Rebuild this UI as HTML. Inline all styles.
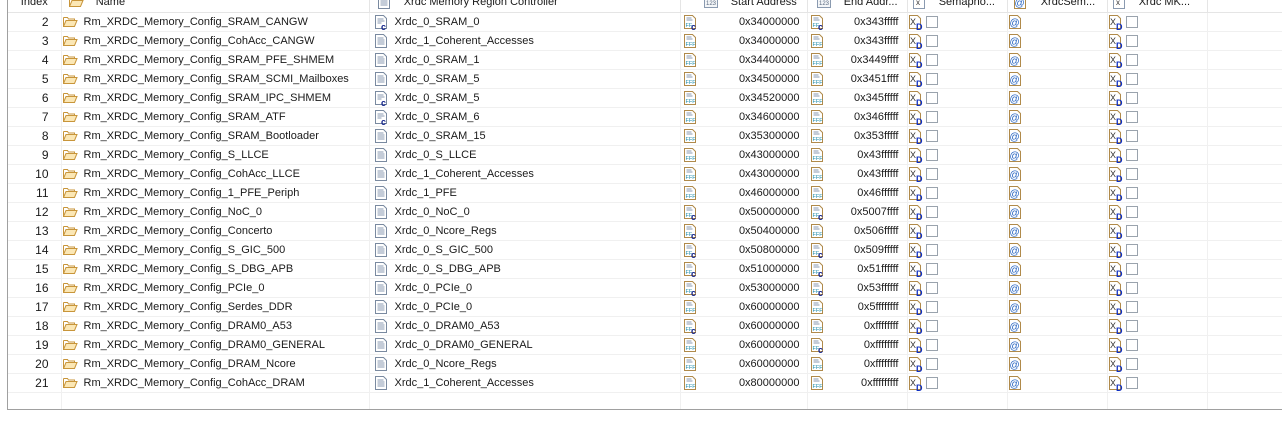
<!DOCTYPE html>
<html><head><meta charset="utf-8"><style>
*{margin:0;padding:0;box-sizing:border-box}
body{width:1282px;height:431px;background:#fff;overflow:hidden;position:relative;font-family:"Liberation Sans",sans-serif;font-size:11px;color:#1a1a1a}
#wrap{position:absolute;left:7px;top:-7px;width:1275px;height:417px;border-left:1px solid #a0a0a0;border-bottom:1px solid #a0a0a0;overflow:hidden}
table{border-collapse:collapse;table-layout:fixed;width:1275px}
td,th{height:19px;border-right:1px solid #f0f0f0;border-bottom:1px solid #f0f0f0;white-space:nowrap;overflow:hidden;font-weight:normal;padding:0;vertical-align:middle;position:relative}
th{border-right:1px solid #e5e5e5;border-bottom:1px solid #e5e5e5;text-align:left}
td.i{text-align:right;padding-right:12px;font-size:12px}
svg{vertical-align:middle;display:inline-block}
.n svg{margin:0 6px 0 0}
.a{text-align:right;padding-right:7px}
.a svg{position:absolute;left:2px;top:1px}
.cb{display:inline-block;width:12px;height:12px;border:1px solid #9aa3ad;background:#fff;vertical-align:middle;margin-left:2px}
tr.e td{height:18px}
</style></head><body>
<svg width="0" height="0" style="position:absolute">
<defs>
<symbol id="fo" viewBox="0 0 16 16"><path d="M1.5 3.5h4l1 1.5h6v2" fill="none" stroke="#c8953a"/><path d="M1.5 3.5v9h11l2.5-6h-11l-2.5 6" fill="#fbe7b5" stroke="#c8953a"/></symbol>
<symbol id="dc" viewBox="0 0 16 16"><path d="M2.5 1.5h8l3 3v10h-11z" fill="#fff" stroke="#7a8aa0"/><path d="M4.5 5h6M4.5 7h7M4.5 9h7M4.5 11h7" stroke="#8a9ab0"/></symbol>
<symbol id="dcc" viewBox="0 0 16 16"><path d="M2.5 1.5h8l3 3v10h-11z" fill="#fff" stroke="#7a8aa0"/><path d="M4.5 5h6M4.5 7h7M4.5 9h4" stroke="#8a9ab0"/><text x="8" y="16" font-size="9" font-weight="bold" fill="#10208a" font-family="Liberation Sans">c</text></symbol>
<symbol id="ff" viewBox="0 0 16 16"><path d="M1.5 1.5h8l3 3v10h-11z" fill="#fff" stroke="#b08a4a"/><path d="M3.5 4h5M3.5 6h6" stroke="#8a9ab0"/><text x="2.5" y="13" font-size="5.5" fill="#1a8aa8" font-family="Liberation Sans">FFF</text></symbol>
<symbol id="fc" viewBox="0 0 16 16"><path d="M1.5 1.5h8l3 3v10h-11z" fill="#fff" stroke="#b08a4a"/><path d="M3.5 4h5M3.5 6h6" stroke="#8a9ab0"/><text x="2.5" y="13" font-size="5.5" fill="#1a8aa8" font-family="Liberation Sans">FF</text><text x="8" y="16" font-size="9" font-weight="bold" fill="#10208a" font-family="Liberation Sans">c</text></symbol>
<symbol id="xd" viewBox="0 0 16 16"><path d="M1.5 1.5h8l3 3v10h-11z" fill="#fff" stroke="#b08a4a"/><text x="2" y="11" font-size="9" fill="#333" font-family="Liberation Sans">X</text><text x="8" y="16" font-size="9" font-weight="bold" fill="#1030c0" font-family="Liberation Sans">D</text></symbol>
<symbol id="at" viewBox="0 0 16 16"><path d="M1.5 1.5h8l3 3v10h-11z" fill="#fff" stroke="#b08a4a"/><text x="1.5" y="12" font-size="10" fill="#2060c0" font-family="Liberation Sans">@</text></symbol>
<symbol id="h1" viewBox="0 0 16 16"><rect x="1.5" y="2.5" width="13" height="11" fill="#f4f6f8" stroke="#8a9ab0"/><text x="3" y="11" font-size="6" fill="#5a6a80" font-family="Liberation Sans">123</text></symbol>
<symbol id="hx" viewBox="0 0 16 16"><rect x="2.5" y="1.5" width="11" height="13" fill="#fff" stroke="#8a9ab0"/><text x="5" y="11" font-size="8" fill="#333" font-family="Liberation Sans">x</text></symbol>
</defs></svg>
<div id="wrap"><table>
<colgroup><col style="width:53px"><col style="width:308px"><col style="width:311px"><col style="width:127px"><col style="width:100px"><col style="width:100px"><col style="width:100px"><col style="width:100px"><col style="width:76px"></colgroup>
<tr><th style="text-align:center">Index</th><th style="padding-left:6px"><svg width="16" height="16"><use href="#fo"/></svg>&nbsp;&nbsp;&nbsp;&nbsp;Name</th><th style="padding-left:6px"><svg width="16" height="16"><use href="#dc"/></svg>&nbsp;&nbsp;&nbsp;&nbsp;Xrdc Memory Region Controller</th><th style="padding-left:22px"><svg width="16" height="16"><use href="#h1"/></svg>&nbsp;&nbsp;&nbsp;&nbsp;Start Address</th><th style="padding-left:8px"><svg width="16" height="16"><use href="#h1"/></svg>&nbsp;&nbsp;&nbsp;&nbsp;End Addr...</th><th style="padding-left:3px"><svg width="16" height="16"><use href="#hx"/></svg>&nbsp;&nbsp;&nbsp;&nbsp;Semapho...</th><th style="padding-left:5px"><svg width="16" height="16"><use href="#at"/></svg>&nbsp;&nbsp;&nbsp;&nbsp;XrdcSem...</th><th style="padding-left:3px"><svg width="16" height="16"><use href="#hx"/></svg>&nbsp;&nbsp;&nbsp;&nbsp;Xrdc MK...</th><th></th></tr>
<tr><td class="i">2</td><td class="n"><svg width="16" height="16"><use href="#fo"/></svg>Rm_XRDC_Memory_Config_SRAM_CANGW</td><td class="n" style="padding-left:3px"><svg width="16" height="16"><use href="#dcc"/></svg>Xrdc_0_SRAM_0</td><td class="a"><svg width="16" height="16"><use href="#fc"/></svg>0x34000000</td><td class="a" style="padding-right:8px"><svg width="16" height="16"><use href="#fc"/></svg>0x343fffff</td><td><svg width="16" height="16"><use href="#xd"/></svg><span class="cb"></span></td><td><svg width="16" height="16"><use href="#at"/></svg></td><td><svg width="16" height="16"><use href="#xd"/></svg><span class="cb"></span></td><td></td></tr>
<tr><td class="i">3</td><td class="n"><svg width="16" height="16"><use href="#fo"/></svg>Rm_XRDC_Memory_Config_CohAcc_CANGW</td><td class="n" style="padding-left:3px"><svg width="16" height="16"><use href="#dc"/></svg>Xrdc_1_Coherent_Accesses</td><td class="a"><svg width="16" height="16"><use href="#ff"/></svg>0x34000000</td><td class="a" style="padding-right:8px"><svg width="16" height="16"><use href="#ff"/></svg>0x343fffff</td><td><svg width="16" height="16"><use href="#xd"/></svg><span class="cb"></span></td><td><svg width="16" height="16"><use href="#at"/></svg></td><td><svg width="16" height="16"><use href="#xd"/></svg><span class="cb"></span></td><td></td></tr>
<tr><td class="i">4</td><td class="n"><svg width="16" height="16"><use href="#fo"/></svg>Rm_XRDC_Memory_Config_SRAM_PFE_SHMEM</td><td class="n" style="padding-left:3px"><svg width="16" height="16"><use href="#dc"/></svg>Xrdc_0_SRAM_1</td><td class="a"><svg width="16" height="16"><use href="#ff"/></svg>0x34400000</td><td class="a" style="padding-right:8px"><svg width="16" height="16"><use href="#ff"/></svg>0x3449ffff</td><td><svg width="16" height="16"><use href="#xd"/></svg><span class="cb"></span></td><td><svg width="16" height="16"><use href="#at"/></svg></td><td><svg width="16" height="16"><use href="#xd"/></svg><span class="cb"></span></td><td></td></tr>
<tr><td class="i">5</td><td class="n"><svg width="16" height="16"><use href="#fo"/></svg>Rm_XRDC_Memory_Config_SRAM_SCMI_Mailboxes</td><td class="n" style="padding-left:3px"><svg width="16" height="16"><use href="#dc"/></svg>Xrdc_0_SRAM_5</td><td class="a"><svg width="16" height="16"><use href="#ff"/></svg>0x34500000</td><td class="a" style="padding-right:8px"><svg width="16" height="16"><use href="#ff"/></svg>0x3451ffff</td><td><svg width="16" height="16"><use href="#xd"/></svg><span class="cb"></span></td><td><svg width="16" height="16"><use href="#at"/></svg></td><td><svg width="16" height="16"><use href="#xd"/></svg><span class="cb"></span></td><td></td></tr>
<tr><td class="i">6</td><td class="n"><svg width="16" height="16"><use href="#fo"/></svg>Rm_XRDC_Memory_Config_SRAM_IPC_SHMEM</td><td class="n" style="padding-left:3px"><svg width="16" height="16"><use href="#dcc"/></svg>Xrdc_0_SRAM_5</td><td class="a"><svg width="16" height="16"><use href="#ff"/></svg>0x34520000</td><td class="a" style="padding-right:8px"><svg width="16" height="16"><use href="#ff"/></svg>0x345fffff</td><td><svg width="16" height="16"><use href="#xd"/></svg><span class="cb"></span></td><td><svg width="16" height="16"><use href="#at"/></svg></td><td><svg width="16" height="16"><use href="#xd"/></svg><span class="cb"></span></td><td></td></tr>
<tr><td class="i">7</td><td class="n"><svg width="16" height="16"><use href="#fo"/></svg>Rm_XRDC_Memory_Config_SRAM_ATF</td><td class="n" style="padding-left:3px"><svg width="16" height="16"><use href="#dcc"/></svg>Xrdc_0_SRAM_6</td><td class="a"><svg width="16" height="16"><use href="#ff"/></svg>0x34600000</td><td class="a" style="padding-right:8px"><svg width="16" height="16"><use href="#ff"/></svg>0x346fffff</td><td><svg width="16" height="16"><use href="#xd"/></svg><span class="cb"></span></td><td><svg width="16" height="16"><use href="#at"/></svg></td><td><svg width="16" height="16"><use href="#xd"/></svg><span class="cb"></span></td><td></td></tr>
<tr><td class="i">8</td><td class="n"><svg width="16" height="16"><use href="#fo"/></svg>Rm_XRDC_Memory_Config_SRAM_Bootloader</td><td class="n" style="padding-left:3px"><svg width="16" height="16"><use href="#dc"/></svg>Xrdc_0_SRAM_15</td><td class="a"><svg width="16" height="16"><use href="#ff"/></svg>0x35300000</td><td class="a" style="padding-right:8px"><svg width="16" height="16"><use href="#ff"/></svg>0x353fffff</td><td><svg width="16" height="16"><use href="#xd"/></svg><span class="cb"></span></td><td><svg width="16" height="16"><use href="#at"/></svg></td><td><svg width="16" height="16"><use href="#xd"/></svg><span class="cb"></span></td><td></td></tr>
<tr><td class="i">9</td><td class="n"><svg width="16" height="16"><use href="#fo"/></svg>Rm_XRDC_Memory_Config_S_LLCE</td><td class="n" style="padding-left:3px"><svg width="16" height="16"><use href="#dc"/></svg>Xrdc_0_S_LLCE</td><td class="a"><svg width="16" height="16"><use href="#ff"/></svg>0x43000000</td><td class="a" style="padding-right:8px"><svg width="16" height="16"><use href="#ff"/></svg>0x43ffffff</td><td><svg width="16" height="16"><use href="#xd"/></svg><span class="cb"></span></td><td><svg width="16" height="16"><use href="#at"/></svg></td><td><svg width="16" height="16"><use href="#xd"/></svg><span class="cb"></span></td><td></td></tr>
<tr><td class="i">10</td><td class="n"><svg width="16" height="16"><use href="#fo"/></svg>Rm_XRDC_Memory_Config_CohAcc_LLCE</td><td class="n" style="padding-left:3px"><svg width="16" height="16"><use href="#dc"/></svg>Xrdc_1_Coherent_Accesses</td><td class="a"><svg width="16" height="16"><use href="#ff"/></svg>0x43000000</td><td class="a" style="padding-right:8px"><svg width="16" height="16"><use href="#ff"/></svg>0x43ffffff</td><td><svg width="16" height="16"><use href="#xd"/></svg><span class="cb"></span></td><td><svg width="16" height="16"><use href="#at"/></svg></td><td><svg width="16" height="16"><use href="#xd"/></svg><span class="cb"></span></td><td></td></tr>
<tr><td class="i">11</td><td class="n"><svg width="16" height="16"><use href="#fo"/></svg>Rm_XRDC_Memory_Config_1_PFE_Periph</td><td class="n" style="padding-left:3px"><svg width="16" height="16"><use href="#dc"/></svg>Xrdc_1_PFE</td><td class="a"><svg width="16" height="16"><use href="#ff"/></svg>0x46000000</td><td class="a" style="padding-right:8px"><svg width="16" height="16"><use href="#ff"/></svg>0x46ffffff</td><td><svg width="16" height="16"><use href="#xd"/></svg><span class="cb"></span></td><td><svg width="16" height="16"><use href="#at"/></svg></td><td><svg width="16" height="16"><use href="#xd"/></svg><span class="cb"></span></td><td></td></tr>
<tr><td class="i">12</td><td class="n"><svg width="16" height="16"><use href="#fo"/></svg>Rm_XRDC_Memory_Config_NoC_0</td><td class="n" style="padding-left:3px"><svg width="16" height="16"><use href="#dc"/></svg>Xrdc_0_NoC_0</td><td class="a"><svg width="16" height="16"><use href="#fc"/></svg>0x50000000</td><td class="a" style="padding-right:8px"><svg width="16" height="16"><use href="#fc"/></svg>0x5007ffff</td><td><svg width="16" height="16"><use href="#xd"/></svg><span class="cb"></span></td><td><svg width="16" height="16"><use href="#at"/></svg></td><td><svg width="16" height="16"><use href="#xd"/></svg><span class="cb"></span></td><td></td></tr>
<tr><td class="i">13</td><td class="n"><svg width="16" height="16"><use href="#fo"/></svg>Rm_XRDC_Memory_Config_Concerto</td><td class="n" style="padding-left:3px"><svg width="16" height="16"><use href="#dc"/></svg>Xrdc_0_Ncore_Regs</td><td class="a"><svg width="16" height="16"><use href="#fc"/></svg>0x50400000</td><td class="a" style="padding-right:8px"><svg width="16" height="16"><use href="#ff"/></svg>0x506fffff</td><td><svg width="16" height="16"><use href="#xd"/></svg><span class="cb"></span></td><td><svg width="16" height="16"><use href="#at"/></svg></td><td><svg width="16" height="16"><use href="#xd"/></svg><span class="cb"></span></td><td></td></tr>
<tr><td class="i">14</td><td class="n"><svg width="16" height="16"><use href="#fo"/></svg>Rm_XRDC_Memory_Config_S_GIC_500</td><td class="n" style="padding-left:3px"><svg width="16" height="16"><use href="#dc"/></svg>Xrdc_0_S_GIC_500</td><td class="a"><svg width="16" height="16"><use href="#fc"/></svg>0x50800000</td><td class="a" style="padding-right:8px"><svg width="16" height="16"><use href="#fc"/></svg>0x509fffff</td><td><svg width="16" height="16"><use href="#xd"/></svg><span class="cb"></span></td><td><svg width="16" height="16"><use href="#at"/></svg></td><td><svg width="16" height="16"><use href="#xd"/></svg><span class="cb"></span></td><td></td></tr>
<tr><td class="i">15</td><td class="n"><svg width="16" height="16"><use href="#fo"/></svg>Rm_XRDC_Memory_Config_S_DBG_APB</td><td class="n" style="padding-left:3px"><svg width="16" height="16"><use href="#dc"/></svg>Xrdc_0_S_DBG_APB</td><td class="a"><svg width="16" height="16"><use href="#fc"/></svg>0x51000000</td><td class="a" style="padding-right:8px"><svg width="16" height="16"><use href="#fc"/></svg>0x51ffffff</td><td><svg width="16" height="16"><use href="#xd"/></svg><span class="cb"></span></td><td><svg width="16" height="16"><use href="#at"/></svg></td><td><svg width="16" height="16"><use href="#xd"/></svg><span class="cb"></span></td><td></td></tr>
<tr><td class="i">16</td><td class="n"><svg width="16" height="16"><use href="#fo"/></svg>Rm_XRDC_Memory_Config_PCIe_0</td><td class="n" style="padding-left:3px"><svg width="16" height="16"><use href="#dc"/></svg>Xrdc_0_PCIe_0</td><td class="a"><svg width="16" height="16"><use href="#fc"/></svg>0x53000000</td><td class="a" style="padding-right:8px"><svg width="16" height="16"><use href="#fc"/></svg>0x53ffffff</td><td><svg width="16" height="16"><use href="#xd"/></svg><span class="cb"></span></td><td><svg width="16" height="16"><use href="#at"/></svg></td><td><svg width="16" height="16"><use href="#xd"/></svg><span class="cb"></span></td><td></td></tr>
<tr><td class="i">17</td><td class="n"><svg width="16" height="16"><use href="#fo"/></svg>Rm_XRDC_Memory_Config_Serdes_DDR</td><td class="n" style="padding-left:3px"><svg width="16" height="16"><use href="#dc"/></svg>Xrdc_0_PCIe_0</td><td class="a"><svg width="16" height="16"><use href="#ff"/></svg>0x60000000</td><td class="a" style="padding-right:8px"><svg width="16" height="16"><use href="#ff"/></svg>0x5ffffffff</td><td><svg width="16" height="16"><use href="#xd"/></svg><span class="cb"></span></td><td><svg width="16" height="16"><use href="#at"/></svg></td><td><svg width="16" height="16"><use href="#xd"/></svg><span class="cb"></span></td><td></td></tr>
<tr><td class="i">18</td><td class="n"><svg width="16" height="16"><use href="#fo"/></svg>Rm_XRDC_Memory_Config_DRAM0_A53</td><td class="n" style="padding-left:3px"><svg width="16" height="16"><use href="#dc"/></svg>Xrdc_0_DRAM0_A53</td><td class="a"><svg width="16" height="16"><use href="#fc"/></svg>0x60000000</td><td class="a" style="padding-right:8px"><svg width="16" height="16"><use href="#ff"/></svg>0xffffffff</td><td><svg width="16" height="16"><use href="#xd"/></svg><span class="cb"></span></td><td><svg width="16" height="16"><use href="#at"/></svg></td><td><svg width="16" height="16"><use href="#xd"/></svg><span class="cb"></span></td><td></td></tr>
<tr><td class="i">19</td><td class="n"><svg width="16" height="16"><use href="#fo"/></svg>Rm_XRDC_Memory_Config_DRAM0_GENERAL</td><td class="n" style="padding-left:3px"><svg width="16" height="16"><use href="#dc"/></svg>Xrdc_0_DRAM0_GENERAL</td><td class="a"><svg width="16" height="16"><use href="#ff"/></svg>0x60000000</td><td class="a" style="padding-right:8px"><svg width="16" height="16"><use href="#fc"/></svg>0xffffffff</td><td><svg width="16" height="16"><use href="#xd"/></svg><span class="cb"></span></td><td><svg width="16" height="16"><use href="#at"/></svg></td><td><svg width="16" height="16"><use href="#xd"/></svg><span class="cb"></span></td><td></td></tr>
<tr><td class="i">20</td><td class="n"><svg width="16" height="16"><use href="#fo"/></svg>Rm_XRDC_Memory_Config_DRAM_Ncore</td><td class="n" style="padding-left:3px"><svg width="16" height="16"><use href="#dc"/></svg>Xrdc_0_Ncore_Regs</td><td class="a"><svg width="16" height="16"><use href="#ff"/></svg>0x60000000</td><td class="a" style="padding-right:8px"><svg width="16" height="16"><use href="#ff"/></svg>0xffffffff</td><td><svg width="16" height="16"><use href="#xd"/></svg><span class="cb"></span></td><td><svg width="16" height="16"><use href="#at"/></svg></td><td><svg width="16" height="16"><use href="#xd"/></svg><span class="cb"></span></td><td></td></tr>
<tr><td class="i">21</td><td class="n"><svg width="16" height="16"><use href="#fo"/></svg>Rm_XRDC_Memory_Config_CohAcc_DRAM</td><td class="n" style="padding-left:3px"><svg width="16" height="16"><use href="#dc"/></svg>Xrdc_1_Coherent_Accesses</td><td class="a"><svg width="16" height="16"><use href="#ff"/></svg>0x80000000</td><td class="a" style="padding-right:8px"><svg width="16" height="16"><use href="#ff"/></svg>0xfffffffff</td><td><svg width="16" height="16"><use href="#xd"/></svg><span class="cb"></span></td><td><svg width="16" height="16"><use href="#at"/></svg></td><td><svg width="16" height="16"><use href="#xd"/></svg><span class="cb"></span></td><td></td></tr>
<tr class="e"><td></td><td></td><td></td><td></td><td></td><td></td><td></td><td></td><td></td></tr>
</table></div>
</body></html>
